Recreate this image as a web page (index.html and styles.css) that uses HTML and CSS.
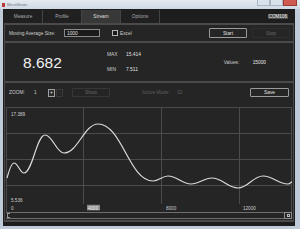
FILE: index.html
```html
<!DOCTYPE html>
<html>
<head>
<meta charset="utf-8">
<title>MicroStrain</title>
<link rel="stylesheet" href="styles.css">
</head>
<body>
<div class="window">
  <div class="titlebar">
    <span class="app-icon"></span>
    <span class="title">MicroStrain</span>
    <div class="caption">
      <span class="cap-btn"></span><span class="cap-btn"></span><span class="cap-btn close"></span>
    </div>
  </div>
  <div class="client">
    <div class="tabbar">
      <div class="tab">Measure</div>
      <div class="tab">Profile</div>
      <div class="tab active">Stream</div>
      <div class="tab">Options</div>
      <div class="port">COM106</div>
    </div>

    <div class="panel settings">
      <span class="avg-lbl">Moving Average Size:</span>
      <span class="input">1000</span>
      <span class="check"></span><span class="check-lbl">Excel</span>
      <span class="btn start">Start</span>
      <span class="btn stop">Stop</span>
    </div>

    <div class="panel readout">
      <div class="big">8.682</div>
      <div class="minmax">
        <span class="mm-lbl">MAX</span><span class="mm-val">15.414</span>
        <span class="mm-lbl">MIN</span><span class="mm-val">7.511</span>
      </div>
      <div class="values"><span class="values-lbl">Values:</span><span class="values-val">15000</span></div>
    </div>

    <div class="panel chart-panel">
      <div class="controls">
        <span class="zoom-lbl">ZOOM:</span>
        <span class="zoom-val">1</span>
        <span class="sq-btn plus">+</span>
        <span class="sq-btn minus">-</span>
        <span class="btn show">Show</span>
        <span class="mode-lbl">Active Mode:</span>
        <span class="mode-val">32</span>
        <span class="btn save">Save</span>
      </div>
      <div class="chart">
        <svg class="plot" width="286" height="105" viewBox="0 0 286 105">
          <g class="grid">
            <line x1="0.5" y1="0" x2="0.5" y2="105"/>
            <line x1="285.5" y1="0" x2="285.5" y2="105"/>
            <line x1="0" y1="0.5" x2="286" y2="0.5"/>
            <line x1="0" y1="26.5" x2="286" y2="26.5"/>
            <line x1="0" y1="52.5" x2="286" y2="52.5"/>
            <line x1="0" y1="78.5" x2="286" y2="78.5"/>
            <line x1="77.5" y1="0" x2="77.5" y2="97"/>
            <line x1="155.5" y1="0" x2="155.5" y2="97"/>
            <line x1="233.5" y1="0" x2="233.5" y2="97"/>
          </g>
          <path class="curve" d="M1,71 C3,64 5,56 8,56 C12,56 14,66 18,66 C26.4,66 30.6,28 39,28 C46.6,28 50.4,46 58,46 C71.6,46 78.4,17 92,17 C116,17 123,74 147,74 C153,74 156,69 162,69 C171,69 176,77 185,77 C193,77 198,71 206,71 C216,71 222,81 232,81 C242,81 247,69 257,69 C267,69 272,77 282,77 C284,77 285,75 287,74"/>
          <text class="ax" x="5" y="9">17.389</text>
          <text class="ax" x="5" y="95">5.536</text>
          <text class="ax" x="5" y="103">0</text>
          <rect class="hl" x="81" y="97.8" width="13" height="5.6"/>
          <text class="ax ax-hl" x="82" y="102.5">4000</text>
          <text class="ax" x="160" y="103">8000</text>
          <text class="ax" x="237" y="103">12000</text>
        </svg>
      </div>
      <div class="scrollbar">
        <div class="track"><span class="thumb"></span></div>
        <div class="corner"><span class="corner-in"></span></div>
      </div>
    </div>
  </div>
</div>
</body>
</html>
```

FILE: styles.css
```css
* { box-sizing: border-box; }
html, body { margin: 0; padding: 0; }
body {
  width: 300px;
  height: 229px;
  overflow: hidden;
  background: #bfcbd8;
  font-family: "Liberation Sans", Arial, sans-serif;
  font-size: 4.8px;
  color: #cfcfcf;
}
.window {
  display: flex;
  flex-direction: column;
  height: 229px;
}
.titlebar {
  height: 9px;
  display: flex;
  align-items: center;
  padding-left: 2px;
  background: linear-gradient(#e4eaf0, #cfd9e4);
}
.app-icon {
  width: 3px;
  height: 4px;
  background: #b8393b;
}
.title {
  margin-left: 2px;
  font-size: 4px;
  color: #6c7480;
}
.caption {
  margin-left: auto;
  margin-right: 3px;
  align-self: flex-start;
  display: flex;
}
.cap-btn {
  width: 13px;
  height: 6px;
  background: #d9e1ea;
  border: 1px solid #aab6c4;
  border-top: none;
}
.cap-btn.close {
  width: 14px;
  background: #cf5a52;
  border-color: #9c3a34;
}
.client {
  flex: 1;
  margin: 0 5px 3px 3px;
  background: #1d1d1d;
  display: flex;
  flex-direction: column;
}
.tabbar {
  height: 14px;
  display: flex;
  padding: 1px 1px 0 1px;
}
.tab {
  width: 39px;
  border-right: 1px solid #444;
  display: flex;
  align-items: center;
  justify-content: center;
  color: #a8a8a8;
  background: #202020;
}
.tab.active {
  background: #383838;
  color: #dedede;
}
.port {
  margin-left: auto;
  margin-right: 6px;
  align-self: center;
  background: #4d4d4d;
  color: #eeeeee;
  padding: 0 1px;
  font-size: 4.6px;
  line-height: 5px;
}
.panel {
  margin: 0 1px;
  border: 1px solid #4a4a4a;
  border-top-width: 2px;
  border-bottom: none;
  background: #252525;
  display: flex;
  align-items: center;
  padding: 0 4px;
}
.settings { height: 18px; }
.avg-lbl { width: 55px; }
.input {
  width: 36px;
  height: 8px;
  border: 1px solid #8a8a8a;
  background: #1a1a1a;
  padding-left: 2px;
  display: flex;
  align-items: center;
  color: #e0e0e0;
}
.check {
  margin-left: 12px;
  width: 6px;
  height: 6px;
  border: 1px solid #b5b5b5;
  background: #1a1a1a;
}
.check-lbl { margin-left: 2px; }
.btn {
  height: 10px;
  width: 38px;
  border: 1px solid #9a9a9a;
  border-radius: 1px;
  display: flex;
  align-items: center;
  justify-content: center;
  color: #e0e0e0;
}
.start { margin-left: auto; }
.stop {
  margin-left: 5px;
  margin-right: -1px;
  border-color: #2e2e2e;
  color: #6a6a6a;
}
.readout { height: 40px; }
.big {
  margin-left: 14px;
  width: 84px;
  font-size: 15.5px;
  line-height: 1;
  margin-top: 2px;
  color: #f0f0f0;
}
.minmax {
  display: grid;
  grid-template-columns: 19px auto;
  row-gap: 9px;
  line-height: 6px;
  font-size: 4.9px;
}
.mm-lbl { color: #d0d0d0; }
.mm-val { color: #e0e0e0; }
.values {
  margin-left: auto;
  margin-right: 23px;
  display: flex;
  margin-top: 1px;
}
.values-lbl { width: 29px; }
.values-val { color: #e8e8e8; }
.chart-panel {
  flex-direction: column;
  align-items: stretch;
  padding: 5px 0 1px 0;
  border-bottom: 2px solid #4a4a4a;
}
.controls {
  height: 9px;
  display: flex;
  align-items: center;
  padding: 0 4px;
}
.zoom-lbl { width: 25px; }
.zoom-val { width: 14px; }
.sq-btn {
  width: 7px;
  height: 8px;
  border: 1px solid #a0a0a0;
  display: flex;
  align-items: center;
  justify-content: center;
  background: #2c2c2c;
  color: #e0e0e0;
}
.minus {
  margin-left: 1px;
  border-color: #3a3a3a;
  background: #252525;
  color: #555;
}
.show {
  margin-left: 9px;
  height: 9px;
  border-color: #363636;
  color: #666;
}
.mode-lbl {
  margin-left: 32px;
  width: 35px;
  color: #5e5e5e;
}
.mode-val { color: #5e5e5e; }
.save {
  margin-left: auto;
  width: 39px;
  height: 9px;
}
.chart {
  margin: 10px 1px 0 1px;
  height: 105px;
}
.plot { display: block; }
.grid line {
  stroke: #4b4b4b;
  stroke-width: 1;
}
.curve {
  fill: none;
  stroke: #dadada;
  stroke-width: 1.2;
}
.ax {
  fill: #cfcfcf;
  font-family: "Liberation Sans", Arial, sans-serif;
  font-size: 4.6px;
}
.ax-hl { fill: #f6f6f6; }
.hl { fill: #8a8a8a; }
.scrollbar {
  margin: 0 1px;
  height: 7px;
  display: flex;
}
.track {
  flex: 1;
  border-top: 1px solid #6e6e6e;
  border-bottom: 1px solid #6e6e6e;
  padding-left: 1px;
  display: flex;
  align-items: center;
}
.thumb {
  width: 3px;
  height: 5px;
  border: 1px solid #9a9a9a;
  border-right: none;
}
.corner {
  width: 8px;
  height: 7px;
  border: 1px solid #8e8e8e;
  display: flex;
  align-items: center;
  justify-content: center;
}
.corner-in {
  width: 3px;
  height: 3px;
  border: 1px solid #bdbdbd;
}
```
